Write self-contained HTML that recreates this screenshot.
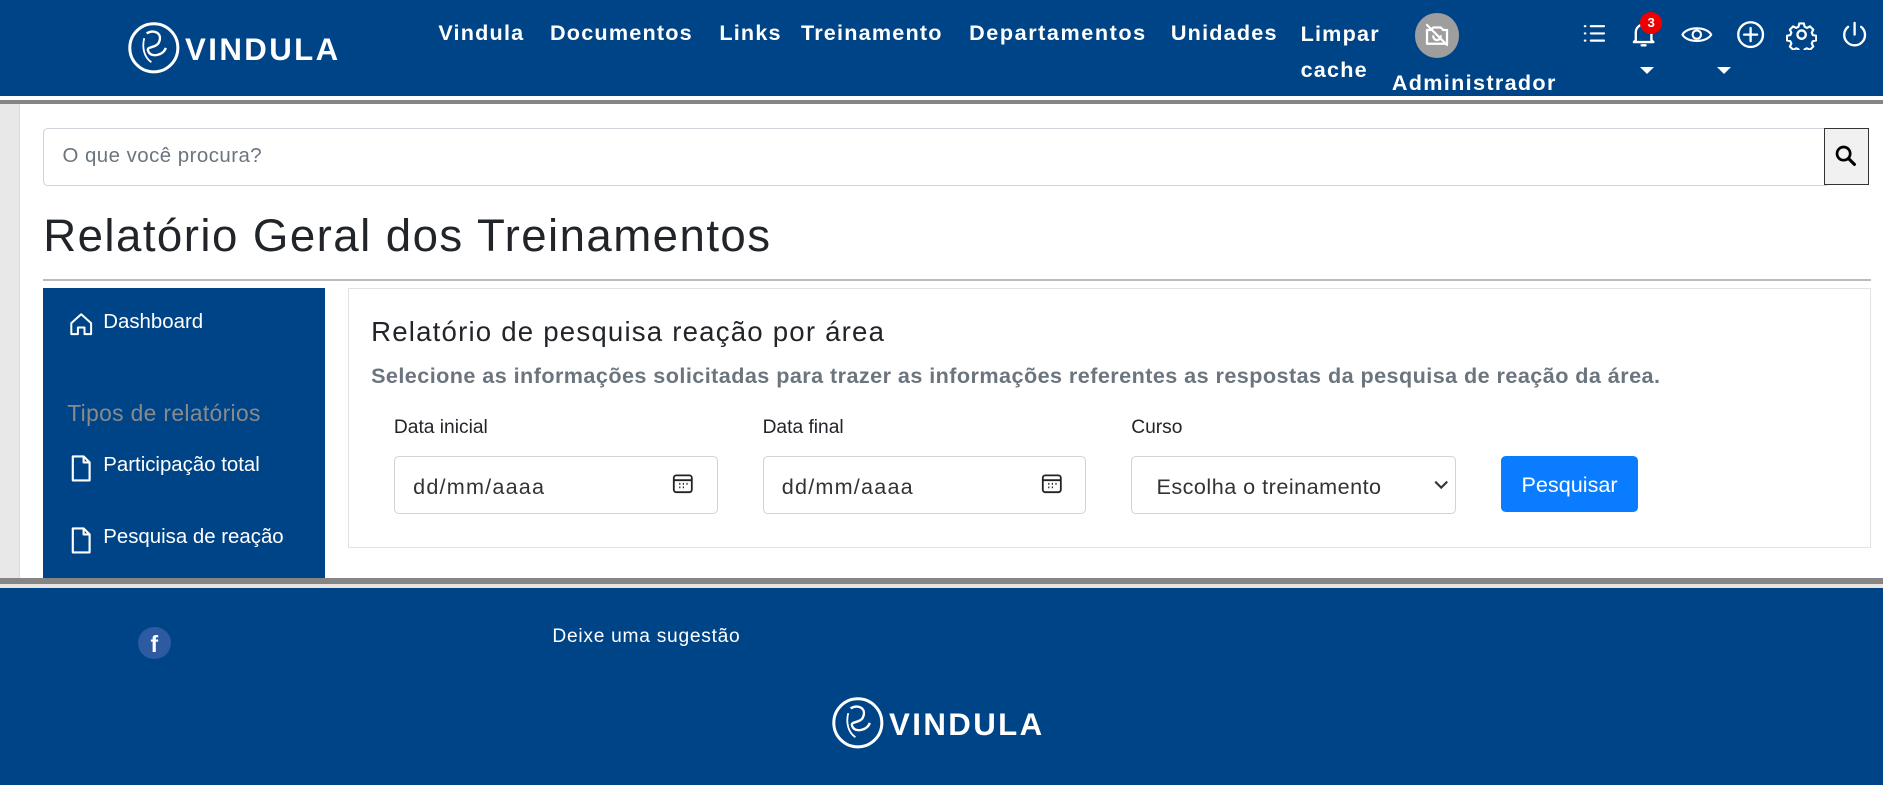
<!DOCTYPE html>
<html><head><meta charset="utf-8"><style>
html,body{margin:0;padding:0;overflow:hidden;}
body{width:1568px;height:654px;zoom:1.20089;position:relative;background:#fff;font-family:"Liberation Sans",sans-serif;color:#212529;}
.a{position:absolute;white-space:nowrap;}
.hdr{left:0;top:0;width:1568px;height:80px;background:#004488;}
.nav{color:#fff;font-weight:bold;font-size:18px;letter-spacing:1px;}
.ic{stroke:#fff;fill:none;stroke-width:1.8;stroke-linecap:round;stroke-linejoin:round;}
.inp{border:1px solid #ced4da;border-radius:4px;background:#fff;}
.lbl{font-size:16px;color:#212529;}
.side{color:#fff;font-size:16px;}
</style></head><body>
<div class="a hdr"></div>
<svg class="a" style="left:104px;top:16px" width="190" height="48" viewBox="0 0 190 48">
<circle cx="24" cy="24" r="20" fill="none" stroke="#fff" stroke-width="2.5"/>
<path d="M18 12c6-4 14 0 10 8c-3 5-12 2-8 8c3 4 12 2 14-4" fill="none" stroke="#fff" stroke-width="2"/>
<path d="M16 16c-2 8 0 16 6 20" fill="none" stroke="#fff" stroke-width="1.5"/>
<text x="50" y="34" fill="#fff" font-family="Liberation Sans" font-weight="bold" font-size="26" letter-spacing="2">VINDULA</text>
</svg>
<div class="a nav" style="left:365px;top:17px">Vindula</div>
<div class="a nav" style="left:458px;top:17px">Documentos</div>
<div class="a nav" style="left:599px;top:17px">Links</div>
<div class="a nav" style="left:667px;top:17px">Treinamento</div>
<div class="a nav" style="left:807px;top:17px;letter-spacing:1.3px">Departamentos</div>
<div class="a nav" style="left:975px;top:17px">Unidades</div>
<div class="a nav" style="left:1083px;top:17px;line-height:30px;margin-top:-4px">Limpar<br>cache</div>
<div class="a" style="left:1178px;top:11px;width:37px;height:37px;border-radius:50%;background:#9e9e9e"></div>
<svg class="a" style="left:1184px;top:17px" width="25" height="25" viewBox="0 0 24 24"><path class="ic" d="M4 8h3l2-2h6l2 2h3v11H4z M9 13a3 3 0 0 0 6 0" stroke-width="1.6"/><path class="ic" d="M4 4l16 16"/></svg>
<div class="a nav" style="left:1159px;top:58px;letter-spacing:1.1px">Administrador</div>
<svg class="a" style="left:1316px;top:16px" width="24" height="24" viewBox="0 0 24 24"><path class="ic" d="M9 6h11M9 12h11M9 18h11M4 6h.5M4 12h.5M4 18h.5"/></svg>
<svg class="a" style="left:1356px;top:15px" width="26" height="26" viewBox="0 0 24 24"><path class="ic" d="M6 17V11a6 6 0 0 1 12 0v6l1.5 1.5h-15zM10.5 21h3"/></svg>
<div class="a" style="left:1366px;top:10px;width:18px;height:18px;border-radius:50%;background:#e00;color:#fff;font-size:11px;font-weight:bold;text-align:center;line-height:18px">3</div>
<div class="a" style="left:1366px;top:56px;border-left:6px solid transparent;border-right:6px solid transparent;border-top:6px solid #fff"></div>
<svg class="a" style="left:1399px;top:16px" width="28" height="26" viewBox="0 0 28 24"><path class="ic" d="M2 12c4-7 20-7 24 0c-4 7-20 7-24 0z"/><circle class="ic" cx="14" cy="12" r="3.5"/></svg>
<div class="a" style="left:1430px;top:56px;border-left:6px solid transparent;border-right:6px solid transparent;border-top:6px solid #fff"></div>
<svg class="a" style="left:1445px;top:16px" width="26" height="26" viewBox="0 0 24 24"><circle class="ic" cx="12" cy="12" r="9.5"/><path class="ic" d="M12 7v10M7 12h10"/></svg>
<svg class="a" style="left:1487px;top:16px" width="26" height="26" viewBox="0 0 24 24"><path class="ic" d="M10 2.5h4l.6 2.8 2 1 2.6-1.3 2.8 2.8-1.3 2.6.9 2 2.9.6v4l-2.9.6-.9 2 1.3 2.6-2.8 2.8-2.6-1.3-2 .9-.6 2.9h-4l-.6-2.9-2-.9-2.6 1.3-2.8-2.8 1.3-2.6-.9-2-2.9-.6v-4l2.9-.6.9-2-1.3-2.6 2.8-2.8 2.6 1.3 2-1z" transform="scale(.9) translate(1.3 1.3)"/><circle class="ic" cx="12" cy="12" r="3.2"/></svg>
<svg class="a" style="left:1531px;top:16px" width="26" height="26" viewBox="0 0 24 24"><path class="ic" d="M12 3v9M7 6a8 8 0 1 0 10 0"/></svg>
<div class="a" style="left:0;top:80px;width:1568px;height:3px;background:#fff"></div>
<div class="a" style="left:0;top:83px;width:1568px;height:4px;background:#858585"></div>
<div class="a" style="left:0;top:87px;width:16px;height:395px;background:#e8e8e8;border-right:1px solid #d8d8d8"></div>
<div class="a inp" style="left:36px;top:107px;width:1484px;height:46px;border-radius:4px 0 0 4px"></div>
<div class="a" style="left:52px;top:121px;font-size:17px;color:#6c757d;letter-spacing:.4px">O que você procura?</div>
<div class="a" style="left:1519px;top:107px;width:36px;height:45px;border:1px solid #333;background:#f1f1f1"></div>
<svg class="a" style="left:1527px;top:120px" width="20" height="20" viewBox="0 0 20 20"><circle cx="8" cy="8" r="5.5" fill="none" stroke="#000" stroke-width="2.2"/><path d="M12 12l5 5" stroke="#000" stroke-width="2.6" stroke-linecap="round"/></svg>
<div class="a" style="left:36px;top:175px;font-size:38px;letter-spacing:1.2px">Relatório Geral dos Treinamentos</div>
<div class="a" style="left:36px;top:232px;width:1522px;height:2px;background:#bbb"></div>
<div class="a" style="left:36px;top:240px;width:235px;height:242px;background:#004488"></div>
<svg class="a" style="left:57px;top:259px" width="22" height="22" viewBox="0 0 24 24"><path class="ic" d="M3 11l9-8 9 8v10h-6v-6h-6v6H3z" stroke-width="1.8"/></svg>
<div class="a side" style="left:86px;top:259px;font-size:17px">Dashboard</div>
<div class="a" style="left:56px;top:333px;font-size:19px;color:#8a8a8a;letter-spacing:.3px">Tipos de relatórios</div>
<svg class="a" style="left:57px;top:378px" width="22" height="24" viewBox="0 0 22 24"><path class="ic" d="M4 2h9l5 5v15H4zM13 2v5h5"/></svg>
<div class="a side" style="left:86px;top:378px;font-size:17px">Participação total</div>
<svg class="a" style="left:57px;top:438px" width="22" height="24" viewBox="0 0 22 24"><path class="ic" d="M4 2h9l5 5v15H4zM13 2v5h5"/></svg>
<div class="a side" style="left:86px;top:438px;font-size:17px">Pesquisa de reação</div>
<div class="a" style="left:290px;top:240px;width:1266px;height:215px;border:1px solid #e2e2e2"></div>
<div class="a" style="left:309px;top:263px;font-size:23px;letter-spacing:1px">Relatório de pesquisa reação por área</div>
<div class="a" style="left:309px;top:302px;font-size:18px;font-weight:bold;color:#6c757d;letter-spacing:.36px">Selecione as informações solicitadas para trazer as informações referentes as respostas da pesquisa de reação da área.</div>
<div class="a lbl" style="left:328px;top:347px">Data inicial</div>
<div class="a lbl" style="left:635px;top:347px">Data final</div>
<div class="a lbl" style="left:942px;top:347px">Curso</div>
<div class="a inp" style="left:328px;top:380px;width:268px;height:46px"></div>
<div class="a" style="left:344px;top:395px;font-size:18px;color:#333;letter-spacing:1px">dd/mm/aaaa</div>
<div class="a inp" style="left:635px;top:380px;width:268px;height:46px"></div>
<div class="a" style="left:651px;top:395px;font-size:18px;color:#333;letter-spacing:1px">dd/mm/aaaa</div>
<svg class="a" style="left:560px;top:394px" width="18" height="18" viewBox="0 0 18 18"><rect x="1.5" y="2" width="15" height="14" rx="2" fill="none" stroke="#222" stroke-width="1.5"/><path d="M1.5 6h15" stroke="#222" stroke-width="1.5"/><path d="M6 9h1M9 9h1M12 9h1M6 12h1M9 12h1" stroke="#222" stroke-width="1.5"/></svg>
<svg class="a" style="left:867px;top:394px" width="18" height="18" viewBox="0 0 18 18"><rect x="1.5" y="2" width="15" height="14" rx="2" fill="none" stroke="#222" stroke-width="1.5"/><path d="M1.5 6h15" stroke="#222" stroke-width="1.5"/><path d="M6 9h1M9 9h1M12 9h1M6 12h1M9 12h1" stroke="#222" stroke-width="1.5"/></svg>
<div class="a inp" style="left:942px;top:380px;width:269px;height:46px"></div>
<div class="a" style="left:963px;top:395px;font-size:18px;color:#333;letter-spacing:.4px">Escolha o treinamento</div>
<svg class="a" style="left:1194px;top:398px" width="12" height="10" viewBox="0 0 12 10"><path d="M1 3l5 5 5-5" fill="none" stroke="#333" stroke-width="1.8"/></svg>
<div class="a" style="left:1250px;top:380px;width:114px;height:46px;background:#0a7cff;border-radius:4px;color:#fff;font-size:18px;text-align:center;line-height:48px">Pesquisar</div>
<div class="a" style="left:0;top:481px;width:1568px;height:5px;background:#858585"></div>
<div class="a" style="left:0;top:486px;width:1568px;height:4px;background:#e8e4df"></div>
<div class="a" style="left:0;top:490px;width:1568px;height:164px;background:#004488"></div>
<div class="a" style="left:115px;top:522px;width:27px;height:27px;border-radius:50%;background:#2d5aa0;color:#fff;font-weight:bold;font-size:19px;text-align:center;line-height:29px">f</div>
<div class="a" style="left:460px;top:521px;font-size:16px;color:#fff;letter-spacing:.6px">Deixe uma sugestão</div>
<svg class="a" style="left:690px;top:578px" width="190" height="48" viewBox="0 0 190 48">
<circle cx="24" cy="24" r="20" fill="none" stroke="#fff" stroke-width="2.5"/>
<path d="M18 12c6-4 14 0 10 8c-3 5-12 2-8 8c3 4 12 2 14-4" fill="none" stroke="#fff" stroke-width="2"/>
<path d="M16 16c-2 8 0 16 6 20" fill="none" stroke="#fff" stroke-width="1.5"/>
<text x="50" y="34" fill="#fff" font-family="Liberation Sans" font-weight="bold" font-size="26" letter-spacing="2">VINDULA</text>
</svg>
</body></html>
